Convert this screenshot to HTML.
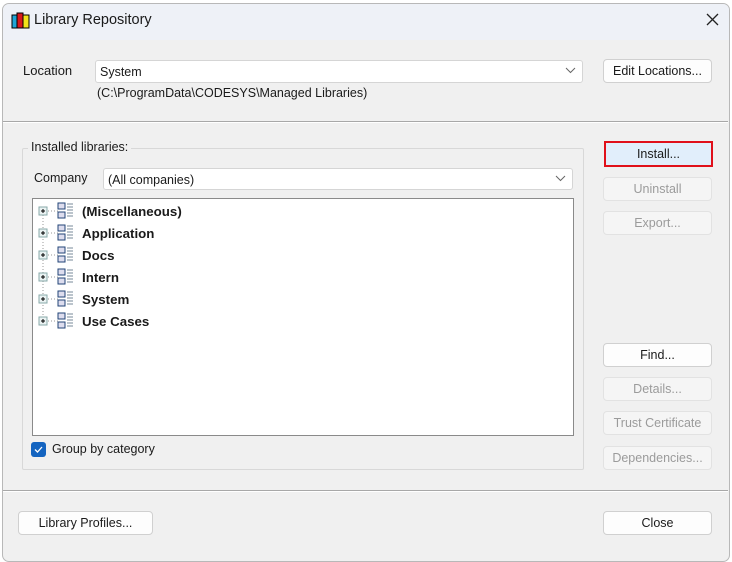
<!DOCTYPE html>
<html><head><style>
body{margin:0;width:732px;height:562px;background:#fff;position:relative;overflow:hidden;font-family:"Liberation Sans",sans-serif;font-size:12.5px;color:#1a1a1a}
.a{position:absolute}
.win{left:2px;top:3px;width:726px;height:557px;background:#f0f0f0;border:1px solid #b8b8b8;border-radius:7px;overflow:hidden}
.title{left:0;top:0;width:726px;height:36px;background:#eef1f7}
.btn{position:absolute;background:#fdfdfd;border:1px solid #d0d0d0;border-radius:4px;text-align:center;line-height:22px;height:22px;box-sizing:content-box}
.dis{color:#9b9b9b;background:#f5f5f5;border-color:#e2e2e2}
.combo{position:absolute;background:#fff;border:1px solid #d5d5d5;border-radius:3px;height:21px;line-height:21px;padding-left:4px;box-sizing:border-box}
.chev{position:absolute;right:6px;top:6px}
.row{position:absolute;left:38px;height:22px;font-weight:bold;font-size:13.3px}
</style></head><body>
<div class="a win">
 <div class="a title"></div>
</div>
<svg class="a" style="left:11px;top:10px" width="20" height="20" viewBox="0 0 20 20">
<rect x="1" y="5" width="5" height="13" fill="#1fa6d6" stroke="#000" stroke-width="1"/>
<rect x="6" y="3" width="6" height="15" fill="#d8181c" stroke="#000" stroke-width="1"/>
<rect x="12" y="5" width="6" height="13" fill="#f2e21a" stroke="#000" stroke-width="1"/>
</svg>
<div class="a" style="left:34px;top:12px;font-size:14.5px">Library Repository</div>
<svg class="a" style="left:706px;top:13px" width="13" height="13"><path d="M1 1L12 12M12 1L1 12" stroke="#222" stroke-width="1.3"/></svg>

<div class="a" style="left:23px;top:63px;font-size:13px">Location</div>
<div class="combo" style="left:95px;top:60px;width:488px;height:23px;line-height:23px">System<svg class="chev" width="11" height="7"><path d="M1 1l4.5 4.5L10 1" stroke="#666" fill="none"/></svg></div>
<div class="a" style="left:97px;top:86px">(C:\ProgramData\CODESYS\Managed Libraries)</div>
<div class="btn" style="left:603px;top:59px;width:107px">Edit Locations...</div>

<div class="a" style="left:3px;top:121px;width:725px;border-top:1px solid #a8a8a8;border-bottom:1px solid #fff"></div>

<div class="a" style="left:22px;top:148px;width:560px;height:320px;border:1px solid #d8d8d8;border-radius:2px"></div>
<div class="a" style="left:28px;top:140px;background:#f0f0f0;padding:0 3px">Installed libraries:</div>
<div class="a" style="left:34px;top:171px">Company</div>
<div class="combo" style="left:103px;top:168px;width:470px;height:22px;line-height:22px">(All companies)<svg class="chev" width="11" height="7"><path d="M1 1l4.5 4.5L10 1" stroke="#666" fill="none"/></svg></div>

<div class="a" style="left:32px;top:198px;width:540px;height:236px;background:#fff;border:1px solid #8a8a8a"></div>
<svg class="a" style="left:36px;top:200px" width="50" height="135">
 <path d="M7 15V120" stroke="#999" stroke-dasharray="1 2"/>
 <g id="r">
  <rect x="3" y="7" width="8" height="8" fill="#eaf2f2" stroke="#8aa"/><path d="M5 11h4M7 9v4" stroke="#000"/>
  <path d="M12 11h10" stroke="#999" stroke-dasharray="1 2"/>
  <rect x="22" y="3" width="7" height="6" fill="#dde" stroke="#247"/><rect x="22" y="12" width="7" height="6" fill="#dde" stroke="#247"/>
  <path d="M31 4h6M31 7h6M31 10h6M31 13h6M31 16h6" stroke="#789"/>
 </g>
 <use href="#r" y="22"/><use href="#r" y="44"/><use href="#r" y="66"/><use href="#r" y="88"/><use href="#r" y="110"/>
</svg>
<div class="row" style="left:82px;top:204px">(Miscellaneous)</div>
<div class="row" style="left:82px;top:226px">Application</div>
<div class="row" style="left:82px;top:248px">Docs</div>
<div class="row" style="left:82px;top:270px">Intern</div>
<div class="row" style="left:82px;top:292px">System</div>
<div class="row" style="left:82px;top:314px">Use Cases</div>

<div class="a" style="left:31px;top:442px;width:15px;height:15px;background:#1464c0;border-radius:3px"><svg width="15" height="15"><path d="M4 7.5l2.5 2.5L11 5" stroke="#fff" fill="none" stroke-width="1.3"/></svg></div>
<div class="a" style="left:52px;top:442px">Group by category</div>

<div class="btn" style="left:604px;top:141px;width:105px;background:#e1eefb;border:2px solid #e0101a;border-radius:0;height:22px">Install...</div>
<div class="btn dis" style="left:603px;top:177px;width:107px">Uninstall</div>
<div class="btn dis" style="left:603px;top:211px;width:107px">Export...</div>
<div class="btn" style="left:603px;top:343px;width:107px">Find...</div>
<div class="btn dis" style="left:603px;top:377px;width:107px">Details...</div>
<div class="btn dis" style="left:603px;top:411px;width:107px">Trust Certificate</div>
<div class="btn dis" style="left:603px;top:446px;width:107px">Dependencies...</div>

<div class="a" style="left:3px;top:490px;width:725px;border-top:1px solid #a8a8a8;border-bottom:1px solid #fff"></div>
<div class="btn" style="left:18px;top:511px;width:133px">Library Profiles...</div>
<div class="btn" style="left:603px;top:511px;width:107px">Close</div>
</body></html>
